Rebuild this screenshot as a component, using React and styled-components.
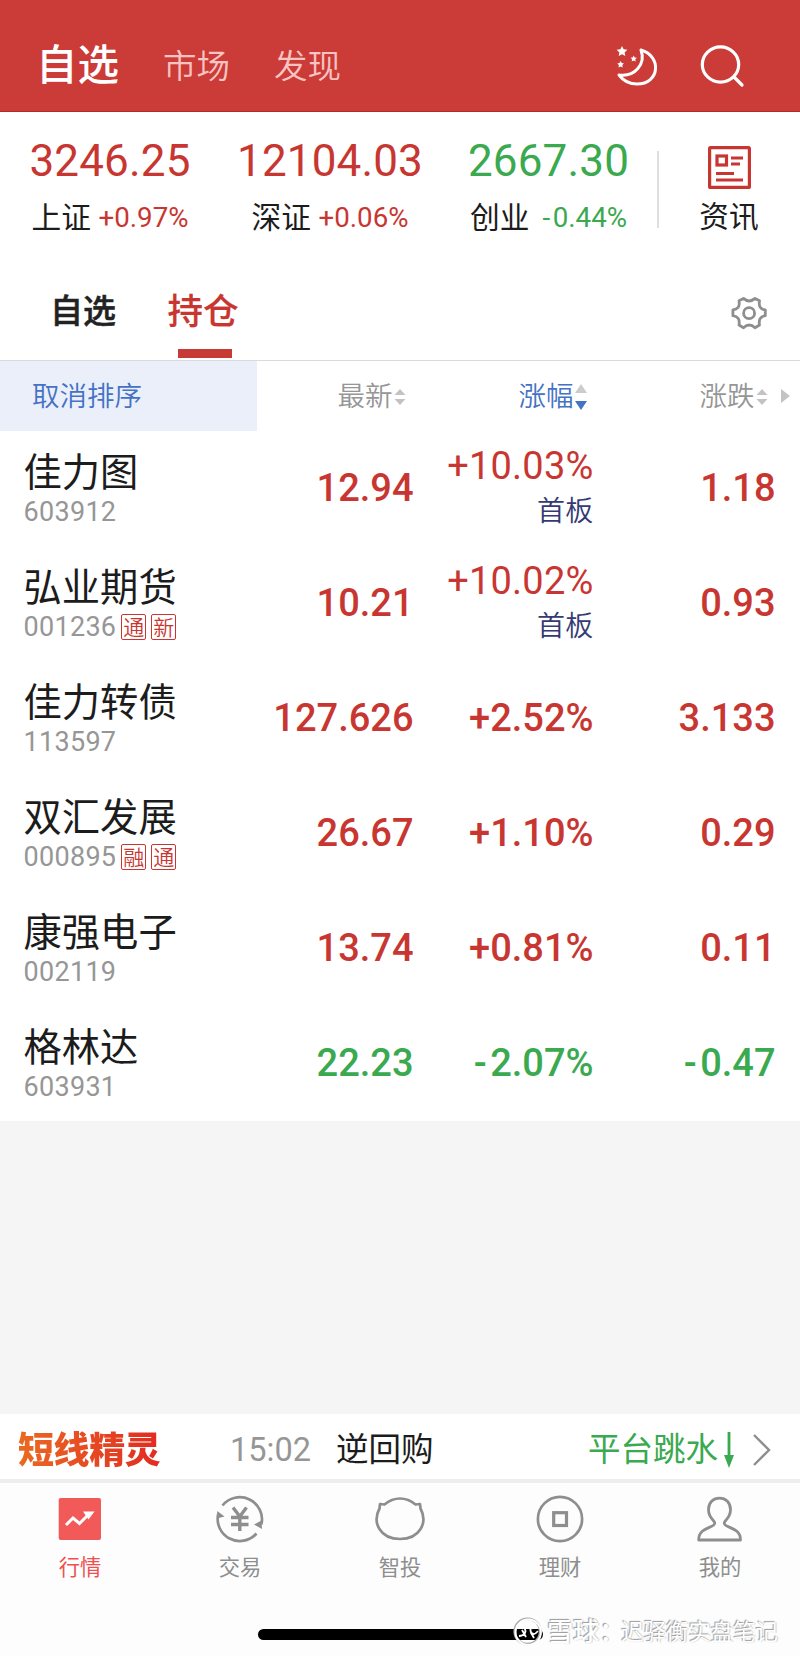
import React from 'react';
import styled, { createGlobalStyle } from 'styled-components';

const RED = '#c83632';
const GREEN = '#3aa94f';
const BLUE = '#4472c4';
const GRAY = '#969696';

const GlobalStyle = createGlobalStyle`
  * { box-sizing: border-box; }
  body {
    margin: 0;
    background: #fff;
    font-family: Roboto, "Noto Sans CJK SC", sans-serif;
    color: #1c1c1c;
  }
  svg { display: block; flex: none; }
`;

const Page = styled.div`
  width: 800px;
  height: 1656px;
  display: flex;
  flex-direction: column;
  overflow: hidden;
  white-space: nowrap;
`;

const TopBar = styled.header`
  height: 112px;
  flex: none;
  display: flex;
  align-items: center;
  padding: 20px 55px 0 36px;
  background: #cb3b37;
  border-bottom: 1px solid #b02c28;
`;
const TopTab = styled.span`
  width: ${(p) => p.$width}px;
  padding-top: ${(p) => (p.$active ? 1 : 2)}px;
  font-size: ${(p) => (p.$active ? 41.5 : 33.5)}px;
  font-weight: ${(p) => (p.$active ? 500 : 350)};
  line-height: 48px;
  color: ${(p) => (p.$active ? '#fff' : '#f8c3c0')};
`;
const TopActions = styled.div`
  margin-left: auto;
  display: flex;
  align-items: center;
  gap: 42px;
`;

const Indices = styled.section`
  height: 150px;
  flex: none;
  display: flex;
  padding-top: 26px;
`;
const IndexCell = styled.div`
  width: ${(p) => p.$width}px;
  display: flex;
  flex-direction: column;
  align-items: center;
  color: ${(p) => (p.$down ? GREEN : RED)};
`;
const IndexValue = styled.div`
  font-size: 44px;
  line-height: 46px;
  letter-spacing: 0.15px;
`;
const IndexMeta = styled.div`
  display: flex;
  align-items: center;
  justify-content: space-between;
  width: 157px;
  margin-top: 14px;
  line-height: 40px;
`;
const IndexName = styled.span`
  font-size: 29.7px;
  font-weight: 400;
  color: #1c1c1c;
`;
const IndexChange = styled.span`
  font-size: 27.7px;
`;
const Sign = styled.span`
  letter-spacing: 0.09em;
`;
const Divider = styled.div`
  width: 2px;
  height: 77px;
  margin: 13px 1px 0 0;
  background: #dedede;
`;
const News = styled.div`
  width: 138px;
  display: flex;
  flex-direction: column;
  align-items: center;
  padding-top: 8px;
  gap: 8px;
  line-height: 40px;
`;

const Tabs = styled.nav`
  height: 99px;
  flex: none;
  display: flex;
  align-items: stretch;
  padding: 26px 33px 0 50px;
  border-bottom: 1px solid #d9dadc;
`;
const Tab = styled.div`
  width: ${(p) => p.$width}px;
  margin-right: 51px;
  display: flex;
  flex-direction: column;
  align-items: center;
  justify-content: space-between;
  padding-bottom: 2px;
  font-size: ${(p) => (p.$active ? 35.5 : 33)}px;
  font-weight: 500;
  -webkit-text-stroke: ${(p) => (p.$active ? 0.2 : 0.5)}px;
  line-height: 48px;
  color: ${(p) => (p.$active ? RED : '#222')};
`;
const TabMarker = styled.div`
  width: 54px;
  height: 9px;
  margin-left: 3px;
  background: #c83a36;
`;
const TabTools = styled.div`
  margin-left: auto;
  padding-top: 8px;
`;

const SortBar = styled.div`
  height: 70px;
  flex: none;
  display: flex;
  align-items: center;
  font-size: 27.5px;
  font-weight: 350;
  color: ${GRAY};
`;
const CancelSort = styled.div`
  width: 257px;
  height: 70px;
  padding: 1px 0 0 32px;
  line-height: 70px;
  background: #ebeffa;
  color: ${BLUE};
`;
const SortCell = styled.div`
  width: ${(p) => p.$width}px;
  display: flex;
  align-items: center;
  justify-content: flex-end;
  gap: 1.5px;
  line-height: 70px;
  padding-top: 1px;
  color: ${(p) => (p.$active ? BLUE : GRAY)};
`;

const Row = styled.div`
  height: 115px;
  flex: none;
  display: flex;
  padding-left: 23.5px;
  color: ${(p) => (p.$down ? GREEN : RED)};
`;
const Stock = styled.div`
  width: 191px;
  padding-top: 19px;
`;
const StockName = styled.div`
  font-size: 38.3px;
  font-weight: 400;
  line-height: 46px;
  color: #1c1c1c;
`;
const StockMeta = styled.div`
  display: flex;
  align-items: center;
  height: 32px;
  gap: 5px;
`;
const Code = styled.span`
  font-size: 27px;
  line-height: 32px;
  letter-spacing: 0.3px;
  color: ${GRAY};
  font-weight: 400;
`;
const Badge = styled.span`
  width: 25px;
  height: 26px;
  border: 1px solid ${RED};
  border-radius: 2px;
  text-align: center;
  font-size: 21px;
  line-height: 26px;
  color: ${RED};
  font-weight: 350;
`;
const Num = styled.div`
  width: ${(p) => p.$width}px;
  display: flex;
  flex-direction: column;
  align-items: flex-end;
  padding-top: ${(p) => (p.$stacked ? 12 : 34)}px;
  font-size: 38px;
  font-weight: ${(p) => (p.$stacked ? 400 : 500)};
  letter-spacing: ${(p) => (p.$stacked ? 0.2 : 0)}px;
  line-height: 46px;
`;
const Note = styled.span`
  font-size: 28px;
  font-weight: 350;
  line-height: 46px;
  color: #343a73;
`;

const Filler = styled.div`
  flex: 1;
  background: #f5f5f5;
`;

const Alert = styled.div`
  height: 69px;
  flex: none;
  display: flex;
  align-items: center;
  padding: 7px 29px 0 18px;
  border-bottom: 4px solid #eeeeef;
  line-height: 48px;
  font-size: 32.5px;
  font-weight: 400;
`;
const AlertTitle = styled.span`
  width: 212px;
  padding-top: 2px;
  font-size: 36px;
  font-weight: 900;
  letter-spacing: -0.4px;
  background: linear-gradient(90deg, #ea6a22 0, #e22b22 142px);
  background-clip: text;
  -webkit-background-clip: text;
  color: transparent;
`;
const AlertTime = styled.span`
  width: 106px;
  font-size: 32.5px;
  color: ${GRAY};
`;
const AlertSignal = styled.div`
  margin-left: auto;
  display: flex;
  align-items: center;
  gap: 6px;
  color: ${GREEN};
`;

const BottomNav = styled.nav`
  position: relative;
  height: 173px;
  flex: none;
  display: flex;
  background: #fdfdfd;
`;
const NavItem = styled.div`
  width: 160px;
  display: flex;
  flex-direction: column;
  align-items: center;
  padding-top: 12px;
  gap: 10px;
  font-size: 21.3px;
  line-height: 30px;
  color: ${(p) => (p.$active ? '#f0504f' : '#8e8e8e')};
`;
const HomeIndicator = styled.div`
  position: absolute;
  left: 258px;
  bottom: 16px;
  width: 285px;
  height: 11px;
  border-radius: 6px;
  background: #000;
`;
const Watermark = styled.div`
  position: absolute;
  right: 22px;
  bottom: 7px;
  display: flex;
  align-items: center;
  font-size: 22.4px;
  line-height: 34px;
  color: #fff;
  text-shadow: -1px -1px 1px #999, 1px 0 1px #ccc;
`;
const WatermarkBrand = styled.span`
  width: 74px;
  margin-left: 4px;
  font-size: 26px;
  font-weight: 500;
`;

const MoonIcon = () => (
  <svg width="42" height="44" viewBox="617 42 42 44" fill="none">
    <path d="M642 48C663 54 661 82 638 82C629 82 623 77 620 73C636 75 647 62 642 48Z" stroke="#fff" strokeWidth="3" strokeLinejoin="round" />
    <g fill="#fff">
      <path d="M623 44l1.6 3.3 3.7.5-2.7 2.6.7 3.6-3.3-1.7-3.3 1.7.7-3.6-2.7-2.6 3.7-.5z" />
      <path d="M634.7 53.4l1 2 2.2.3-1.6 1.6.4 2.2-2-1-2 1 .4-2.2-1.6-1.6 2.2-.3z" />
      <path d="M621.6 59l1.1 2.1 2.3.4-1.7 1.6.4 2.3-2.1-1-2.1 1 .4-2.3-1.7-1.6 2.3-.4z" />
    </g>
  </svg>
);
const SearchIcon = () => (
  <svg width="45" height="44" viewBox="700 43 45 44" fill="none" stroke="#fff" strokeWidth="3.2" strokeLinecap="round">
    <ellipse cx="720.5" cy="63.5" rx="18.2" ry="17.6" />
    <path d="M734 76L742 84" />
  </svg>
);
const NewsIcon = () => (
  <svg width="43" height="43" viewBox="708 146 43 43" fill="none" stroke={RED} strokeWidth="3.2">
    <rect x="709.6" y="147.6" width="39.8" height="39.8" rx="1" />
    <rect x="717" y="156" width="9.5" height="9" />
    <path d="M731 158h12M731 164h9M716 173.5h18M716 180h27" strokeWidth="2.9" />
  </svg>
);
const GearIcon = () => (
  <svg width="36" height="34" viewBox="731.5 296 36 34" fill="none" stroke="#8e8e8e" strokeWidth="2.8" strokeLinejoin="round">
    <path d="M744 298.4L739.5 300.8C740.5 306.5 738.5 309.2 733.4 310L733.4 315.7C738.5 316.5 740.5 319.5 739.5 325L744 327.7C748 323.8 751.5 323.8 755.5 327.7L760 325C759 319.5 761 316.5 765.8 315.7L765.8 310C761 309.2 759 306.5 760 300.8L755.5 298.4C751.5 302 748 302 744 298.4Z" />
    <circle cx="749.6" cy="313.2" r="5.5" />
  </svg>
);
const SortArrows = ({ active }) => (
  <svg width="12" height={active ? 26 : 16} viewBox={active ? '0 0 12 26' : '0 0 12 16'}>
    {active ? (
      <>
        <path d="M6 0L12 9H0Z" fill="#cccccf" />
        <path d="M0 17H12L6 26Z" fill={BLUE} />
      </>
    ) : (
      <path d="M6 0L11.5 6H.5ZM.5 10H11.5L6 16Z" fill="#c3c3c3" />
    )}
  </svg>
);
const MoreArrow = styled.svg`
  margin-left: 13px;
`;
const DropArrow = () => (
  <svg width="10" height="36" viewBox="0 0 10 36">
    <path d="M3.6 0H6.4V23H10L5 36L0 23H3.6Z" fill={GREEN} />
  </svg>
);
const Chevron = styled.svg`
  margin-left: 19px;
`;

const MarketIcon = () => (
  <svg width="48" height="48" viewBox="56 1495.5 48 48">
    <rect x="58.7" y="1498.5" width="42.3" height="42" rx="2" fill="#f25a5a" />
    <path d="M66 1525.5L73 1518.5L79.5 1524L89 1514.5" fill="none" stroke="#fff" strokeWidth="3" />
    <path d="M83 1512H94.5L88.5 1520Z" fill="#fff" />
  </svg>
);
const TradeIcon = () => (
  <svg width="48" height="48" viewBox="216 1495.5 48 48" fill="none" stroke="#8e8e8e" strokeWidth="2.7">
    <path d="M222.5 1506A22.2 22.2 0 0 1 261.4 1525" />
    <path d="M256.5 1534A22.2 22.2 0 0 1 218.3 1514" />
    <path d="M217.3 1511.5L224.5 1517L217 1519ZM262 1529.5L254 1525L261.5 1521Z" fill="#8e8e8e" stroke="none" />
    <path d="M233 1508L239.8 1517L246.5 1508M239.8 1517V1531.5M231 1518H248.5M231 1525H248.5" strokeWidth="3.4" />
  </svg>
);
const AdvisorIcon = () => (
  <svg width="52" height="48" viewBox="374 1495.5 52 48" fill="none" stroke="#8e8e8e" strokeWidth="2.7" strokeLinejoin="round">
    <path d="M384.5 1505C394 1497 406 1497 415.5 1505L420 1504.5L420.5 1509C428 1523 420 1539.5 400 1539.5C380 1539.5 372 1523 379.5 1509L380 1504.5Z" />
  </svg>
);
const WealthIcon = () => (
  <svg width="48" height="48" viewBox="535.5 1495.5 48 48" fill="none" stroke="#8e8e8e">
    <circle cx="559.5" cy="1519.5" r="22.1" strokeWidth="2.7" />
    <rect x="553.2" y="1513.2" width="12.8" height="12.8" strokeWidth="3.2" />
  </svg>
);
const ProfileIcon = () => (
  <svg width="48" height="48" viewBox="696 1495.5 48 48" fill="none" stroke="#8e8e8e" strokeWidth="2.8" strokeLinejoin="round">
    <path d="M714.8 1523.5C715 1521 708.5 1519 708.5 1510C708.5 1503 713 1498.6 719.5 1498.6C726 1498.6 730.5 1503 730.5 1510C730.5 1519 724 1521 724.2 1523.5C724.5 1529 740.5 1527 740.5 1540.5H698.7C698.7 1527 714.5 1529 714.8 1523.5Z" />
  </svg>
);
const WatermarkLogo = () => (
  <svg width="30" height="30" viewBox="0 0 30 30" fill="none">
    <circle cx="14.5" cy="14.5" r="12.7" stroke="#aaa" strokeWidth="2.8" />
    <circle cx="15.2" cy="15.3" r="12.7" stroke="#fff" strokeWidth="2" />
    <path d="M7 8Q14 11 12 16Q10 19 6 19M23 7Q17 9 17.5 14Q20 20 25 14M9 13L13 20M17.5 15L21 21" stroke="#fff" strokeWidth="1.8" />
  </svg>
);

const Figure = ({ children }) =>
  children.startsWith('-') ? (
    <span>
      <Sign>-</Sign>
      {children.slice(1)}
    </span>
  ) : (
    <span>{children}</span>
  );

const indices = [
  { value: '3246.25', name: '上证', change: '+0.97%', width: 220 },
  { value: '12104.03', name: '深证', change: '+0.06%', width: 220 },
  { value: '2667.30', name: '创业', change: '-0.44%', width: 217, down: true },
];

const stocks = [
  { name: '佳力图', code: '603912', tags: [], price: '12.94', pct: '+10.03%', note: '首板', diff: '1.18' },
  { name: '弘业期货', code: '001236', tags: ['通', '新'], price: '10.21', pct: '+10.02%', note: '首板', diff: '0.93' },
  { name: '佳力转债', code: '113597', tags: [], price: '127.626', pct: '+2.52%', diff: '3.133' },
  { name: '双汇发展', code: '000895', tags: ['融', '通'], price: '26.67', pct: '+1.10%', diff: '0.29' },
  { name: '康强电子', code: '002119', tags: [], price: '13.74', pct: '+0.81%', diff: '0.11' },
  { name: '格林达', code: '603931', tags: [], price: '22.23', pct: '-2.07%', diff: '-0.47', down: true },
];

const navItems = [
  { label: '行情', Icon: MarketIcon, active: true },
  { label: '交易', Icon: TradeIcon },
  { label: '智投', Icon: AdvisorIcon },
  { label: '理财', Icon: WealthIcon },
  { label: '我的', Icon: ProfileIcon },
];

export default function App() {
  return (
    <Page>
      <GlobalStyle />
      <TopBar>
        <TopTab $active $width={127}>自选</TopTab>
        <TopTab $width={111}>市场</TopTab>
        <TopTab $width={80}>发现</TopTab>
        <TopActions>
          <MoonIcon />
          <SearchIcon />
        </TopActions>
      </TopBar>

      <Indices>
        {indices.map((i) => (
          <IndexCell key={i.name} $width={i.width} $down={i.down}>
            <IndexValue>{i.value}</IndexValue>
            <IndexMeta>
              <IndexName>{i.name}</IndexName>
              <IndexChange><Figure>{i.change}</Figure></IndexChange>
            </IndexMeta>
          </IndexCell>
        ))}
        <Divider />
        <News>
          <NewsIcon />
          <IndexName>资讯</IndexName>
        </News>
      </Indices>

      <Tabs>
        <Tab $width={66}>自选</Tab>
        <Tab $active $width={72}>
          持仓
          <TabMarker />
        </Tab>
        <TabTools>
          <GearIcon />
        </TabTools>
      </Tabs>

      <SortBar>
        <CancelSort>取消排序</CancelSort>
        <SortCell $width={149}>最新<SortArrows /></SortCell>
        <SortCell $active $width={181}>涨幅<SortArrows active /></SortCell>
        <SortCell $width={181}>涨跌<SortArrows /></SortCell>
        <MoreArrow width="9" height="14" viewBox="0 0 9 14">
          <path d="M0 0L9 7L0 14Z" fill="#c3c3c3" />
        </MoreArrow>
      </SortBar>

      {stocks.map((s) => (
        <Row key={s.code} $down={s.down}>
          <Stock>
            <StockName>{s.name}</StockName>
            <StockMeta>
              <Code>{s.code}</Code>
              {s.tags.map((t) => (
                <Badge key={t}>{t}</Badge>
              ))}
            </StockMeta>
          </Stock>
          <Num $width={199}>{s.price}</Num>
          <Num $width={180} $stacked={!!s.note}>
            <Figure>{s.pct}</Figure>
            {s.note && <Note>{s.note}</Note>}
          </Num>
          <Num $width={182}>
            <Figure>{s.diff}</Figure>
          </Num>
        </Row>
      ))}

      <Filler />

      <Alert>
        <AlertTitle>短线精灵</AlertTitle>
        <AlertTime>15:02</AlertTime>
        <span>逆回购</span>
        <AlertSignal>
          平台跳水
          <DropArrow />
        </AlertSignal>
        <Chevron width="18" height="32" viewBox="0 0 18 32" fill="none" stroke="#8e8e8e" strokeWidth="2.4">
          <path d="M1 1L16 16L1 31" />
        </Chevron>
      </Alert>

      <BottomNav>
        {navItems.map(({ label, Icon, active }) => (
          <NavItem key={label} $active={active}>
            <Icon />
            {label}
          </NavItem>
        ))}
        <HomeIndicator />
        <Watermark>
          <WatermarkLogo />
          <WatermarkBrand>雪球：</WatermarkBrand>
          <span>迟驿衡实盘笔记</span>
        </Watermark>
      </BottomNav>
    </Page>
  );
}
